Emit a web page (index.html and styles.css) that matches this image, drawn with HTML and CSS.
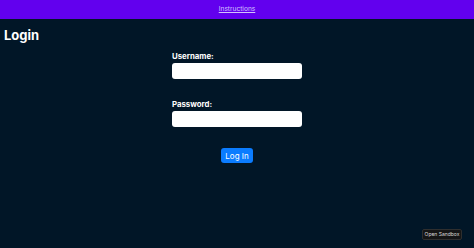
FILE: index.html
```html
<!DOCTYPE html>
<html lang="en">
<head>
<meta charset="utf-8">
<title>Login</title>
<link rel="stylesheet" href="styles.css">
</head>
<body>
<header class="topbar">
  <a class="topbar-link" href="#">Instructions</a>
</header>
<h1 class="page-title">Login</h1>
<form class="login-form">
  <div class="field">
    <label class="field-label" for="username">Username:</label>
    <input class="field-input" id="username" type="text">
  </div>
  <div class="field">
    <label class="field-label" for="password">Password:</label>
    <input class="field-input" id="password" type="password">
  </div>
  <button class="login-btn" type="button">Log In</button>
</form>
<button class="sandbox-btn" type="button">Open Sandbox</button>
</body>
</html>
```
FILE: styles.css
```css
html, body {
  margin: 0;
  padding: 0;
}
body {
  background: #011627;
  color: #ffffff;
  font-family: Inter, "Noto Sans", sans-serif;
  height: 248px;
  overflow: hidden;
}
.topbar {
  height: 19px;
  background: #6200ee;
  display: flex;
  align-items: center;
  justify-content: center;
}
.topbar-link {
  font-size: 6.6px;
  line-height: 9px;
  color: #d2c2ff;
  text-decoration: underline;
}
.page-title {
  margin: 9px 0 0 4px;
  font-size: 13px;
  line-height: 14px;
  font-weight: 700;
}
.login-form {
  width: 130px;
  margin: 9px auto 0;
  display: flex;
  flex-direction: column;
  gap: 20px;
}
.field {
  display: flex;
  flex-direction: column;
}
.field-label {
  font-size: 7.8px;
  line-height: 10px;
  font-weight: 700;
  margin-bottom: 2px;
}
.field-input {
  box-sizing: border-box;
  width: 130px;
  height: 16px;
  border: none;
  border-radius: 3px;
  background: #ffffff;
  padding: 0 4px;
  margin: 0;
}
.login-btn {
  align-self: center;
  margin-top: 1px;
  width: 32px;
  height: 15px;
  padding: 0;
  border: none;
  border-radius: 3px;
  background: #0b7cff;
  color: #ffffff;
  font-family: Inter, "Noto Sans", sans-serif;
  font-size: 8px;
}
.sandbox-btn {
  position: fixed;
  right: 12px;
  bottom: 8px;
  box-sizing: border-box;
  width: 40px;
  height: 11px;
  padding: 0;
  background: #151515;
  border: 1px solid #2e2e2e;
  border-radius: 2px;
  color: #dadada;
  font-family: Inter, "Noto Sans", sans-serif;
  font-size: 5px;
  line-height: 9px;
}
```
